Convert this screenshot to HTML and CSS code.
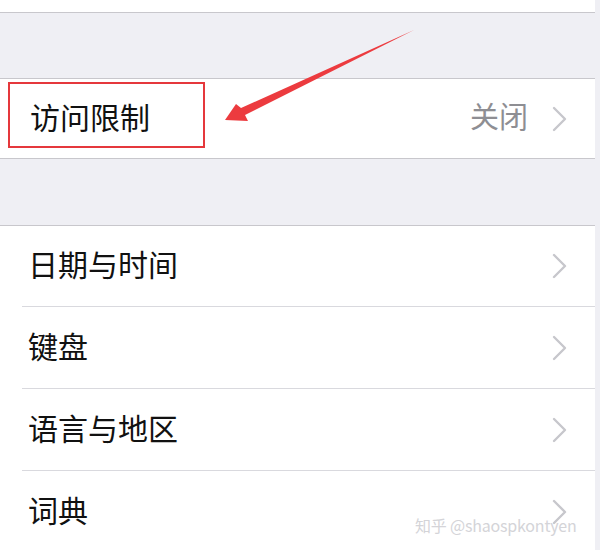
FILE: index.html
```html
<!DOCTYPE html>
<html lang="zh-CN">
<head>
    <meta charset="UTF-8">
    <meta name="viewport" content="width=device-width, initial-scale=1.0">
    <title>通用</title>
    <link rel="stylesheet" href="styles.css">
</head>
<body>
    <div class="top-cell"></div>

    <div class="group first-group">
        <div class="row">
            <span class="label">访问限制</span>
            <span class="value">关闭</span>
            <svg class="chevron" width="15" height="26" viewBox="0 0 15 26"><path d="M2 2 L13 13 L2 24" fill="none" stroke="#c7c7cc" stroke-width="2.4" stroke-linecap="round" stroke-linejoin="round"/></svg>
        </div>
    </div>

    <div class="group second-group">
        <div class="row">
            <span class="label">日期与时间</span>
            <svg class="chevron" width="15" height="26" viewBox="0 0 15 26"><path d="M2 2 L13 13 L2 24" fill="none" stroke="#c7c7cc" stroke-width="2.4" stroke-linecap="round" stroke-linejoin="round"/></svg>
        </div>
        <div class="row">
            <span class="label">键盘</span>
            <svg class="chevron" width="15" height="26" viewBox="0 0 15 26"><path d="M2 2 L13 13 L2 24" fill="none" stroke="#c7c7cc" stroke-width="2.4" stroke-linecap="round" stroke-linejoin="round"/></svg>
        </div>
        <div class="row">
            <span class="label">语言与地区</span>
            <svg class="chevron" width="15" height="26" viewBox="0 0 15 26"><path d="M2 2 L13 13 L2 24" fill="none" stroke="#c7c7cc" stroke-width="2.4" stroke-linecap="round" stroke-linejoin="round"/></svg>
        </div>
        <div class="row">
            <span class="label">词典</span>
            <svg class="chevron" width="15" height="26" viewBox="0 0 15 26"><path d="M2 2 L13 13 L2 24" fill="none" stroke="#c7c7cc" stroke-width="2.4" stroke-linecap="round" stroke-linejoin="round"/></svg>
        </div>
    </div>

    <!-- annotation drawn over the screenshot -->
    <div class="highlight-box"></div>
    <svg class="arrow" width="600" height="550" viewBox="0 0 600 550">
        <polygon points="225,120 236,104 241,108 414,30 245,115 248,121" fill="#ec3b3f"/>
    </svg>

    <div class="watermark">知乎 @shaospkontyen</div>
</body>
</html>
```

FILE: styles.css
```css
*{
    margin: 0;
    padding: 0;
    box-sizing: border-box;
}

body{
    width: 600px;
    height: 550px;
    overflow: hidden;
    background: #efeff4;
    font-family: "Noto Sans CJK SC", "Noto Sans", sans-serif;
    position: relative;
}

.top-cell{
    height: 13px;
    margin-right: 5px;
    background: #fff;
    border-bottom: 1px solid #c8c7cc;
}

.group{
    margin-right: 5px;
    background: #fff;
    border-top: 1px solid #c8c7cc;
    border-bottom: 1px solid #c8c7cc;
}

.first-group{
    margin-top: 65px;
}

.second-group{
    margin-top: 66px;
    border-bottom: none;
}

.row{
    display: flex;
    align-items: center;
    height: 79px;
    padding: 0 28px 0 28px;
}

.second-group .row{
    height: 82px;
    border-top: 1px solid #d9d9de;
    margin-left: 22px;
    padding-left: 6px;
}

.second-group .row:first-child{
    border-top: none;
    height: 80px;
}

.label{
    flex: 1;
    font-size: 30px;
    line-height: 1;
    color: #111;
    margin-top: -6px;
}

.first-group .label{
    padding-left: 2px;
}

.value{
    font-size: 29px;
    line-height: 1;
    color: #8e8e93;
    margin-right: 24px;
    margin-top: -6px;
}

.chevron{
    display: block;
}

.highlight-box{
    position: absolute;
    left: 8px;
    top: 82px;
    width: 197px;
    height: 66px;
    border: 2px solid #e5383c;
}

.arrow{
    position: absolute;
    left: 0;
    top: 0;
}

.watermark{
    position: absolute;
    left: 415px;
    top: 513px;
    font-size: 16px;
    color: #d4d4d8;
    letter-spacing: -0.2px;
}
```
